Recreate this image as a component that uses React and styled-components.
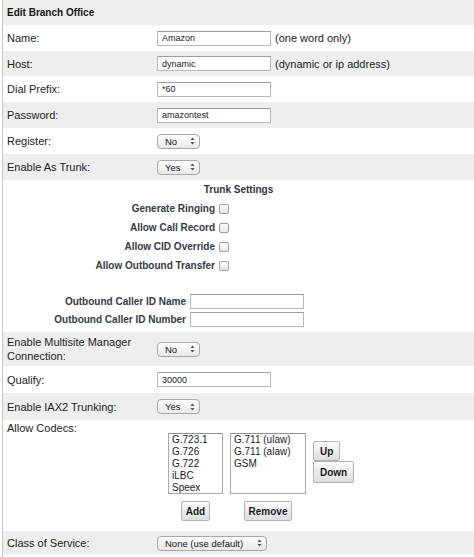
import React from 'react';
import styled, { createGlobalStyle } from 'styled-components';

const GlobalStyle = createGlobalStyle`
  html, body {
    margin: 0;
    padding: 0;
    background: #fff;
  }
  body {
    font-family: "Liberation Sans", Arial, sans-serif;
    color: #222;
  }
`;

function Arrows() {
  return (
    <svg width="5" height="8" viewBox="0 0 5 8">
      <path d="M2.5 0.5 L4.6 3 L0.4 3 Z" fill="#555" />
      <path d="M2.5 7.5 L4.6 5 L0.4 5 Z" fill="#555" />
    </svg>
  );
}

function DropDown({ width, value, options }) {
  return (
    <SelectWrap>
      <Select $w={width} defaultValue={value}>
        {options.map((o) => (
          <option key={o}>{o}</option>
        ))}
      </Select>
      <ArrowBox>
        <Arrows />
      </ArrowBox>
    </SelectWrap>
  );
}

function Field({ label, children, shade, h }) {
  return (
    <Row $shade={shade} $h={h}>
      <Label>{label}</Label>
      <Value>{children}</Value>
    </Row>
  );
}

const checks = ['Generate Ringing', 'Allow Call Record', 'Allow CID Override', 'Allow Outbound Transfer'];
const leftCodecs = ['G.723.1', 'G.726', 'G.722', 'iLBC', 'Speex'];
const rightCodecs = ['G.711 (ulaw)', 'G.711 (alaw)', 'GSM'];

export default function App() {
  return (
    <>
      <GlobalStyle />
      <Page>
        <Header>Edit Branch Office</Header>

        <Field label="Name:">
          <TextInput defaultValue="Amazon" />
          <Note>(one word only)</Note>
        </Field>
        <Field label="Host:" shade h={25}>
          <TextInput defaultValue="dynamic" />
          <Note>(dynamic or ip address)</Note>
        </Field>
        <Field label="Dial Prefix:">
          <TextInput defaultValue="*60" />
        </Field>
        <Field label="Password:" shade>
          <TextInput defaultValue="amazontest" />
        </Field>
        <Field label="Register:">
          <DropDown width={43} value="No" options={['No', 'Yes']} />
        </Field>
        <Field label="Enable As Trunk:" shade>
          <DropDown width={43} value="Yes" options={['No', 'Yes']} />
        </Field>

        <TrunkBlock>
          <TrunkTitle>Trunk Settings</TrunkTitle>
          <CheckList>
            {checks.map((c) => (
              <CheckRow key={c}>
                <BoldLabel>{c}</BoldLabel>
                <Check type="checkbox" />
              </CheckRow>
            ))}
          </CheckList>
          <CallerGrid>
            <BoldLabel>Outbound Caller ID Name</BoldLabel>
            <TextInput />
            <BoldLabel>Outbound Caller ID Number</BoldLabel>
            <TextInput />
          </CallerGrid>
        </TrunkBlock>

        <Field label="Enable Multisite Manager Connection:" shade h={34}>
          <DropDown width={43} value="No" options={['No', 'Yes']} />
        </Field>
        <Field label="Qualify:" h={27}>
          <TextInput defaultValue="30000" />
        </Field>
        <Field label="Enable IAX2 Trunking:" shade h={27}>
          <DropDown width={43} value="Yes" options={['No', 'Yes']} />
        </Field>

        <CodecRow>
          <Label>Allow Codecs:</Label>
          <CodecArea>
            <ListCol $w={55}>
              <ListBox>
                {leftCodecs.map((c) => (
                  <ListItem key={c}>{c}</ListItem>
                ))}
              </ListBox>
              <Button>Add</Button>
            </ListCol>
            <ListCol $w={76}>
              <ListBox>
                {rightCodecs.map((c) => (
                  <ListItem key={c}>{c}</ListItem>
                ))}
              </ListBox>
              <Button>Remove</Button>
            </ListCol>
            <SideButtons>
              <SideButton>Up</SideButton>
              <SideButton $tall>Down</SideButton>
            </SideButtons>
          </CodecArea>
        </CodecRow>

        <Field label="Class of Service:" shade h={24}>
          <DropDown width={110} value="None (use default)" options={['None (use default)']} />
        </Field>
      </Page>
    </>
  );
}

const Page = styled.div`
  margin-left: 2px;
  border-left: 1px solid #c8c8c8;
  min-height: 100vh;
  box-sizing: border-box;
`;

const Header = styled.div`
  height: 25px;
  display: flex;
  align-items: center;
  padding-left: 4px;
  background: #eeeeee;
  font-size: 10px;
  font-weight: bold;
  color: #151515;
`;

const Row = styled.div`
  display: flex;
  align-items: center;
  height: ${(p) => p.$h || 26}px;
  background: ${(p) => (p.$shade ? '#eeeeee' : '#fff')};
`;

const Label = styled.div`
  width: 154px;
  flex-shrink: 0;
  box-sizing: border-box;
  padding: 0 4px;
  font-size: 11px;
  line-height: 14px;
  color: #222;
`;

const Value = styled.div`
  display: flex;
  align-items: center;
  gap: 4px;
`;

const TextInput = styled.input`
  width: 114px;
  height: 15px;
  box-sizing: border-box;
  margin: 0;
  padding: 0 4px;
  border: 1px solid #b9b9b9;
  border-top-color: #9c9c9c;
  background: #fff;
  font-family: "Liberation Sans", Arial, sans-serif;
  font-size: 9px;
  color: #222;
  outline: none;
`;

const Note = styled.span`
  font-size: 11px;
  color: #222;
`;

const SelectWrap = styled.span`
  position: relative;
  display: inline-flex;
`;

const Select = styled.select`
  appearance: none;
  width: ${(p) => p.$w}px;
  height: 15px;
  box-sizing: border-box;
  margin: 0;
  padding: 0 0 0 7px;
  border: 1px solid #a8a8a8;
  border-radius: 4px;
  background: linear-gradient(#ffffff, #e8e8e8);
  font-family: "Liberation Sans", Arial, sans-serif;
  font-size: 9.5px;
  color: #111;
  outline: none;
`;

const ArrowBox = styled.span`
  position: absolute;
  right: 5px;
  top: 50%;
  transform: translateY(-50%);
  display: flex;
  pointer-events: none;
`;

const TrunkBlock = styled.div`
  background: #fff;
  padding: 3px 0 4px;
`;

const TrunkTitle = styled.div`
  text-align: center;
  font-size: 10px;
  font-weight: bold;
  line-height: 14px;
  color: #2e3540;
  margin-bottom: 2px;
`;

const CheckList = styled.div`
  width: 226px;
  display: grid;
  justify-items: end;
  margin-bottom: 17px;
`;

const CheckRow = styled.div`
  height: 19px;
  display: flex;
  align-items: center;
  gap: 4px;
`;

const BoldLabel = styled.span`
  font-size: 10px;
  font-weight: bold;
  color: #333b46;
  white-space: nowrap;
`;

const Check = styled.input`
  appearance: none;
  width: 10px;
  height: 10px;
  margin: 0;
  border: 1px solid #9d9d9d;
  border-radius: 2px;
  background: linear-gradient(#ffffff, #e6e6e6);
`;

const CallerGrid = styled.div`
  display: grid;
  grid-template-columns: 183px 114px;
  grid-auto-rows: 18px;
  column-gap: 4px;
  align-items: center;
  justify-items: end;
`;

const CodecRow = styled.div`
  display: flex;
  align-items: flex-start;
  height: 111px;
  background: #fff;
  & > ${Label} {
    padding-top: 1px;
  }
`;

const CodecArea = styled.div`
  display: flex;
  align-items: flex-start;
  gap: 7px;
  padding: 13px 0 0 11px;
`;

const ListCol = styled.div`
  width: ${(p) => p.$w}px;
  display: flex;
  flex-direction: column;
  align-items: center;
  gap: 7px;
`;

const ListBox = styled.div`
  width: 100%;
  height: 61px;
  box-sizing: border-box;
  border: 1px solid #a9a9a9;
  border-top-color: #8f8f8f;
  background: #fff;
  overflow: hidden;
`;

const ListItem = styled.div`
  height: 12px;
  line-height: 12px;
  padding-left: 3px;
  font-size: 10px;
  color: #1a1a1a;
  white-space: nowrap;
`;

const Button = styled.button`
  height: 20px;
  margin: 0;
  padding: 0 4px;
  border: 1px solid #b3b3b3;
  border-radius: 2px;
  background: linear-gradient(#fbfbfb, #dedede);
  font-family: "Liberation Sans", Arial, sans-serif;
  font-size: 10px;
  font-weight: bold;
  color: #1a1a1a;
`;

const SideButtons = styled.div`
  display: flex;
  flex-direction: column;
  align-items: flex-start;
  padding-top: 8px;
`;

const SideButton = styled(Button)`
  height: ${(p) => (p.$tall ? 22 : 20)}px;
  padding: 0 6px;
`;
